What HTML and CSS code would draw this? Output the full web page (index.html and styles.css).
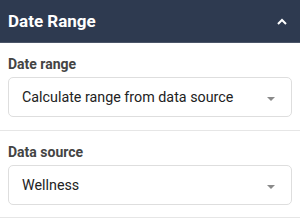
FILE: index.html
```html
<!DOCTYPE html>
<html lang="en">
<head>
  <meta charset="UTF-8">
  <title>Date Range</title>
  <link rel="stylesheet" href="styles.css">
</head>
<body>

<div class="panel">
  <div class="panel-header">
    <span class="panel-title">Date Range</span>
    <svg class="chevron" width="10" height="7" viewBox="0 0 10 7">
      <path d="M1 6 L5 2 L9 6" fill="none" stroke="#fff" stroke-width="2"/>
    </svg>
  </div>

  <div class="field">
    <label class="field-label">Date range</label>
    <div class="select">
      <span>Calculate range from data source</span>
      <span class="caret"></span>
    </div>
  </div>

  <div class="field">
    <label class="field-label">Data source</label>
    <div class="select">
      <span>Wellness</span>
      <span class="caret"></span>
    </div>
  </div>
</div>

</body>
</html>
```

FILE: styles.css
```css
body {
  margin: 0;
  font-family: Roboto, "Liberation Sans", Arial, sans-serif;
  background: #fff;
}
.panel-header {
  height: 42px;
  background: #2e3a50;
  border-bottom: 1px solid #4b5568;
  display: flex;
  align-items: center;
  justify-content: space-between;
  padding: 0 13px 0 8px;
}
.panel-title {
  color: #fff;
  font-size: 17px;
  font-weight: 700;
}
.chevron {
  margin-top: 1px;
}
.field {
  padding: 13px 8px 13px 8px;
  border-bottom: 1px solid #e6e6e6;
}
.field + .field {
  padding-bottom: 12px;
}
.field-label {
  display: block;
  font-size: 14px;
  line-height: 16px;
  font-weight: 700;
  color: #444;
  margin-bottom: 5px;
}
.select {
  height: 38px;
  border: 1px solid #dedede;
  border-radius: 5px;
  display: flex;
  align-items: center;
  justify-content: space-between;
  padding: 0 16px 0 13px;
  font-size: 14.3px;
  color: #222;
}
.caret {
  width: 0;
  height: 0;
  border-left: 4.5px solid transparent;
  border-right: 4.5px solid transparent;
  border-top: 4.5px solid #8a8a8a;
  margin-top: 3px;
}
```
